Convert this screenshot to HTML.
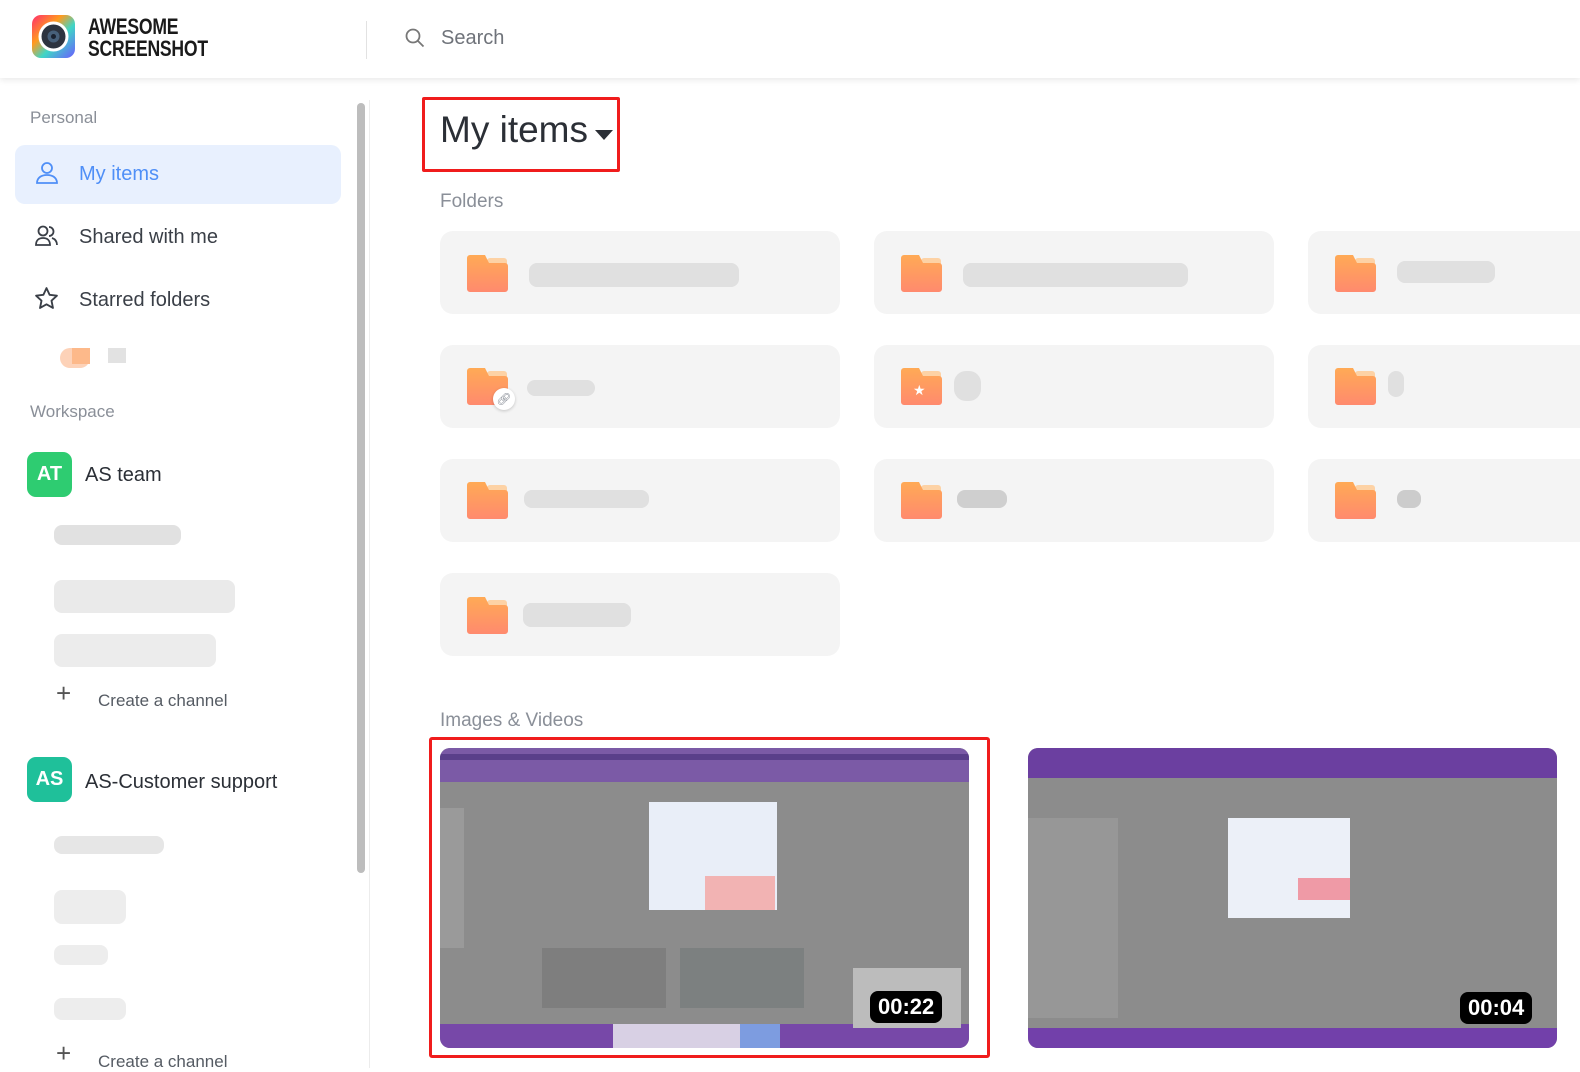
<!DOCTYPE html>
<html><head><meta charset="utf-8"><style>
*{box-sizing:border-box;margin:0;padding:0}
body{width:1580px;height:1068px;overflow:hidden;background:#fff;font-family:"Liberation Sans",sans-serif;position:relative;color:#2b2f36}
.a{position:absolute}
.hdr{left:0;top:0;width:1580px;height:78px;background:#fff;box-shadow:0 2px 6px rgba(0,0,0,.09);z-index:2}
.nav{font-size:20px;color:#3a3f47}
.lbl{font-size:17px;color:#8a8f98}
.card{background:#f4f4f4;border-radius:13px;height:83px}
.fold{width:41px;height:37px}
.blur{background:#dcdcdc;border-radius:8px;opacity:.85}
.thumb{border-radius:10px;overflow:hidden;background:#8c8c8c}
.dur{background:#000;color:#fff;font-weight:bold;font-size:22px;border-radius:8px;padding:3px 8px}
</style></head><body>
<div class="a hdr">
 <svg class="a" style="left:32px;top:15px" width="43" height="43" viewBox="0 0 43 43"><defs><linearGradient id="lg" x1="0" y1="0" x2="1" y2="1"><stop offset="0" stop-color="#ff2d6f"/><stop offset=".35" stop-color="#ff9a1f"/><stop offset=".6" stop-color="#3fd6c6"/><stop offset="1" stop-color="#6a5cff"/></linearGradient></defs><rect width="43" height="43" rx="9" fill="url(#lg)"/><circle cx="21.5" cy="21.5" r="15" fill="#fff"/><circle cx="21.5" cy="21.5" r="12" fill="#2d3440"/><circle cx="21.5" cy="21.5" r="6" fill="#47607a"/><circle cx="21.5" cy="21.5" r="2.5" fill="#1a2230"/></svg>
 <div class="a" style="left:88px;top:16px;font-weight:bold;font-size:22px;line-height:22px;letter-spacing:-.3px;transform:scaleX(.8);transform-origin:left;color:#1a1a1a">AWESOME<br>SCREENSHOT</div>
 <div class="a" style="left:366px;top:21px;width:1px;height:38px;background:#e2e2e2"></div>
 <svg class="a" style="left:405px;top:28px" width="20" height="20" viewBox="0 0 20 20"><circle cx="8" cy="8" r="6.5" fill="none" stroke="#777" stroke-width="1.8"/><path d="M13 13l5.5 5.5" stroke="#777" stroke-width="1.8"/></svg>
 <div class="a" style="left:441px;top:27px;font-size:20px;color:#6f737a">Search</div>
</div>

<!-- sidebar -->
<div class="a lbl" style="left:30px;top:108px">Personal</div>
<div class="a" style="left:15px;top:145px;width:326px;height:59px;background:#e8f0fe;border-radius:10px"></div>
<svg class="a" style="left:35px;top:161px" width="24" height="24" viewBox="0 0 24 24" fill="none" stroke="#4f8ff7" stroke-width="1.8"><circle cx="12" cy="7" r="5"/><path d="M2 22c0-5 4-8 10-8s10 3 10 8z"/></svg>
<div class="a nav" style="left:79px;top:163px;color:#4f8ff7;font-weight:500">My items</div>
<svg class="a" style="left:35px;top:225px" width="24" height="22" viewBox="0 0 24 22" fill="none" stroke="#3a3f47" stroke-width="1.8"><circle cx="8" cy="6" r="4.5"/><path d="M1 20c0-5 3-7 7-7s7 2 7 7z"/><path d="M14 2a4.5 4.5 0 010 9M17 13c3 1 5 3 5 7"/></svg>
<div class="a nav" style="left:79px;top:226px">Shared with me</div>
<svg class="a" style="left:34px;top:286px" width="25" height="25" viewBox="0 0 24 24" fill="none" stroke="#3a3f47" stroke-width="1.8" stroke-linejoin="round"><path d="M12 2l3 6.5 7 .8-5.2 4.8 1.4 7L12 17.6 5.8 21.1l1.4-7L2 9.3l7-.8z"/></svg>
<div class="a nav" style="left:79px;top:289px">Starred folders</div>
<div class="a" style="left:60px;top:348px;width:30px;height:20px;background:#fdd2b8;border-radius:10px"></div>
<div class="a" style="left:72px;top:348px;width:18px;height:16px;background:#fdb98a"></div>
<div class="a" style="left:108px;top:348px;width:18px;height:15px;background:#e2e2e2"></div>
<div class="a lbl" style="left:30px;top:402px">Workspace</div>
<div class="a" style="left:27px;top:452px;width:45px;height:45px;background:#2ecc71;border-radius:9px;color:#fff;font-weight:bold;font-size:20px;text-align:center;line-height:45px">AT</div>
<div class="a nav" style="left:85px;top:464px;color:#2b2f36">AS team</div>
<div class="a blur" style="left:54px;top:525px;width:127px;height:20px"></div>
<div class="a blur" style="left:54px;top:580px;width:181px;height:33px;opacity:.6"></div>
<div class="a blur" style="left:54px;top:634px;width:162px;height:33px;opacity:.55"></div>
<div class="a" style="left:56px;top:680px;font-size:26px;color:#555;line-height:26px">+</div>
<div class="a" style="left:98px;top:691px;font-size:17px;color:#555b63">Create a channel</div>
<div class="a" style="left:27px;top:757px;width:45px;height:45px;background:#1fc09a;border-radius:9px;color:#fff;font-weight:bold;font-size:20px;text-align:center;line-height:45px">AS</div>
<div class="a nav" style="left:85px;top:771px;color:#2b2f36">AS-Customer support</div>
<div class="a blur" style="left:54px;top:836px;width:110px;height:18px;opacity:.7"></div>
<div class="a blur" style="left:54px;top:890px;width:72px;height:34px;opacity:.5"></div>
<div class="a blur" style="left:54px;top:945px;width:54px;height:20px;opacity:.5"></div>
<div class="a blur" style="left:54px;top:998px;width:72px;height:22px;opacity:.5"></div>
<div class="a" style="left:56px;top:1040px;font-size:26px;color:#555;line-height:26px">+</div>
<div class="a" style="left:98px;top:1052px;font-size:17px;color:#555b63">Create a channel</div>
<div class="a" style="left:357px;top:103px;width:8px;height:770px;background:#bdbdbd;border-radius:4px"></div>
<div class="a" style="left:369px;top:100px;width:1px;height:968px;background:#ececec"></div>

<!-- main -->
<div class="a" style="left:422px;top:97px;width:198px;height:75px;border:3px solid #f01c1c;border-radius:2px"></div>
<div class="a" style="left:440px;top:109px;font-size:37px;color:#2b2f36;font-weight:500">My items</div>
<svg class="a" style="left:595px;top:130px" width="18" height="10" viewBox="0 0 18 10"><path d="M0 0h18L9 10z" fill="#2b2f36"/></svg>
<div class="a" style="left:440px;top:191px;font-size:19px;color:#8a8f98">Folders</div>

<svg width="0" height="0" style="position:absolute"><defs><linearGradient id="fg" x1="0" y1="0" x2="0" y2="1"><stop offset="0" stop-color="#ffaa55"/><stop offset="1" stop-color="#ff8a6e"/></linearGradient><symbol id="fo" viewBox="0 0 41 37"><rect x="20" y="3" width="20" height="16" rx="3" fill="#fdd2a5"/><path d="M3 0h15l4 8h16a3 3 0 013 3v23a3 3 0 01-3 3H3a3 3 0 01-3-3V3a3 3 0 013-3z" fill="url(#fg)"/></symbol></defs></svg>

<!-- row 1 -->
<div class="a card" style="left:440px;top:231px;width:400px"></div>
<svg class="a fold" style="left:467px;top:255px"><use href="#fo"/></svg>
<div class="a blur" style="left:529px;top:263px;width:210px;height:24px"></div>
<div class="a card" style="left:874px;top:231px;width:400px"></div>
<svg class="a fold" style="left:901px;top:255px"><use href="#fo"/></svg>
<div class="a blur" style="left:963px;top:263px;width:225px;height:24px"></div>
<div class="a card" style="left:1308px;top:231px;width:300px"></div>
<svg class="a fold" style="left:1335px;top:255px"><use href="#fo"/></svg>
<div class="a blur" style="left:1397px;top:261px;width:98px;height:22px"></div>
<!-- row 2 -->
<div class="a card" style="left:440px;top:345px;width:400px"></div>
<svg class="a fold" style="left:467px;top:368px"><use href="#fo"/></svg>
<div class="a" style="left:493px;top:388px;width:22px;height:22px;border-radius:50%;background:#fff;box-shadow:0 1px 3px rgba(0,0,0,.2);color:#8a8f98;font-size:12px;text-align:center;line-height:22px">&#x1F517;&#xFE0E;</div>
<div class="a blur" style="left:527px;top:380px;width:68px;height:16px"></div>
<div class="a card" style="left:874px;top:345px;width:400px"></div>
<svg class="a fold" style="left:901px;top:368px"><use href="#fo"/></svg>
<div class="a" style="left:913px;top:382px;color:#fff;font-size:14px">★</div>
<div class="a blur" style="left:954px;top:371px;width:27px;height:30px;border-radius:12px"></div>
<div class="a card" style="left:1308px;top:345px;width:300px"></div>
<svg class="a fold" style="left:1335px;top:368px"><use href="#fo"/></svg>
<div class="a blur" style="left:1388px;top:371px;width:16px;height:26px"></div>
<!-- row 3 -->
<div class="a card" style="left:440px;top:459px;width:400px"></div>
<svg class="a fold" style="left:467px;top:482px"><use href="#fo"/></svg>
<div class="a blur" style="left:524px;top:490px;width:125px;height:18px"></div>
<div class="a card" style="left:874px;top:459px;width:400px"></div>
<svg class="a fold" style="left:901px;top:482px"><use href="#fo"/></svg>
<div class="a blur" style="left:957px;top:490px;width:50px;height:18px;background:#c8c8c8"></div>
<div class="a card" style="left:1308px;top:459px;width:300px"></div>
<svg class="a fold" style="left:1335px;top:482px"><use href="#fo"/></svg>
<div class="a blur" style="left:1397px;top:490px;width:24px;height:18px;background:#c4c4c4"></div>
<!-- row 4 -->
<div class="a card" style="left:440px;top:573px;width:400px"></div>
<svg class="a fold" style="left:467px;top:597px"><use href="#fo"/></svg>
<div class="a blur" style="left:523px;top:603px;width:108px;height:24px"></div>

<div class="a" style="left:440px;top:710px;font-size:19px;color:#8a8f98">Images &amp; Videos</div>

<!-- thumb 1 -->
<div class="a" style="left:429px;top:737px;width:561px;height:321px;border:3px solid #f01c1c;border-radius:3px"></div>
<div class="a thumb" style="left:440px;top:748px;width:529px;height:300px">
 <div class="a" style="left:0;top:0;width:529px;height:34px;background:#7b5aa6"></div>
 <div class="a" style="left:0;top:6px;width:529px;height:6px;background:#5a3f8a"></div>
 <div class="a" style="left:0;top:276px;width:529px;height:24px;background:#7748a8"></div>
 <div class="a" style="left:173px;top:276px;width:130px;height:24px;background:#d8d0e4"></div>
 <div class="a" style="left:300px;top:276px;width:40px;height:24px;background:#7d9ce0"></div>
 <div class="a" style="left:209px;top:54px;width:128px;height:108px;background:#e9eef8"></div>
 <div class="a" style="left:265px;top:128px;width:70px;height:34px;background:#f2b3b3"></div>
 <div class="a" style="left:102px;top:200px;width:124px;height:60px;background:#7e7e7e"></div>
 <div class="a" style="left:240px;top:200px;width:124px;height:60px;background:#7c8080"></div>
 <div class="a" style="left:0;top:60px;width:24px;height:140px;background:#9a9a9a"></div>
 <div class="a" style="left:413px;top:220px;width:108px;height:60px;background:#bcbcbc"></div>
 <div class="a dur" style="left:430px;top:243px">00:22</div>
</div>
<!-- thumb 2 -->
<div class="a thumb" style="left:1028px;top:748px;width:529px;height:300px">
 <div class="a" style="left:0;top:0;width:529px;height:30px;background:#6b3fa0"></div>
 <div class="a" style="left:0;top:280px;width:529px;height:20px;background:#7240aa"></div>
 <div class="a" style="left:200px;top:70px;width:122px;height:100px;background:#ecf0f8"></div>
 <div class="a" style="left:270px;top:130px;width:52px;height:22px;background:#ef9aa6"></div>
 <div class="a" style="left:0;top:70px;width:90px;height:200px;background:#979797"></div>
 <div class="a dur" style="left:432px;top:244px">00:04</div>
</div>
</body></html>
